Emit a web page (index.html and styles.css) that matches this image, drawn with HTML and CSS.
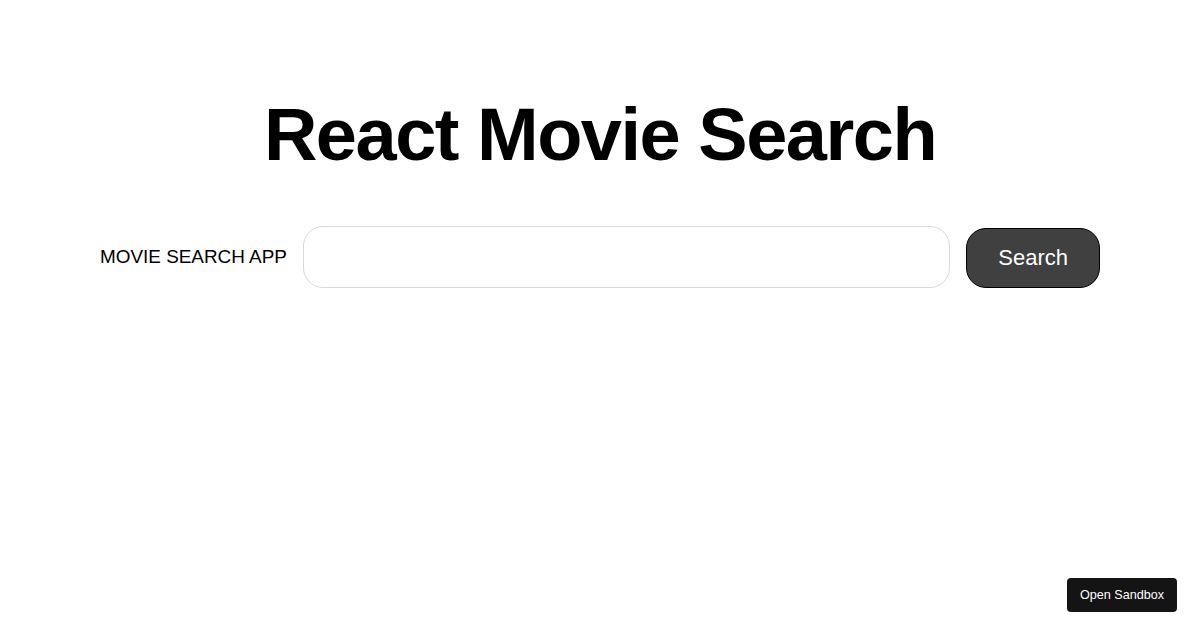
FILE: index.html
```html
<!DOCTYPE html>
<html>
<head>
<meta charset="utf-8">
<link rel="stylesheet" href="styles.css">
</head>
<body>
<div class="container">
  <h1 class="title">React Movie Search</h1>
  <form class="form">
    <label class="label" for="q">MOVIE SEARCH APP</label>
    <input class="input" id="q" type="text">
    <button class="button" type="button">Search</button>
  </form>
</div>
<a class="sandbox">Open Sandbox</a>
</body>
</html>
```

FILE: styles.css
```css
html, body {
  margin: 0;
  padding: 0;
  background: #fff;
}
body {
  font-family: "Liberation Sans", Arial, sans-serif;
  color: #000;
}
.container {
  width: 1000px;
  margin: 0 auto;
  padding-top: 92px;
}
.title {
  margin: 0;
  text-align: center;
  font-size: 74px;
  font-weight: bold;
  letter-spacing: -1.5px;
  line-height: 86px;
}
.form {
  display: flex;
  align-items: center;
  gap: 16px;
  margin-top: 48px;
}
.label {
  font-size: 18.9px;
  white-space: nowrap;
}
.input {
  flex: 1;
  height: 62px;
  box-sizing: border-box;
  border: 1px solid #d9d9d9;
  border-radius: 20px;
  padding: 0 16px;
  font-size: 20px;
  outline: none;
}
.button {
  height: 60px;
  box-sizing: border-box;
  padding: 0 31px;
  background: #404040;
  color: #fff;
  border: 1px solid #000;
  border-radius: 20px;
  font-family: "Liberation Sans", Arial, sans-serif;
  font-size: 22px;
  margin-top: 2px;
}
.sandbox {
  position: fixed;
  right: 23px;
  bottom: 18px;
  background: #141414;
  color: #fff;
  font-size: 12.6px;
  padding: 0 13px;
  height: 34px;
  line-height: 34px;
  border-radius: 4px;
  font-family: "Liberation Sans", Arial, sans-serif;
}
```
